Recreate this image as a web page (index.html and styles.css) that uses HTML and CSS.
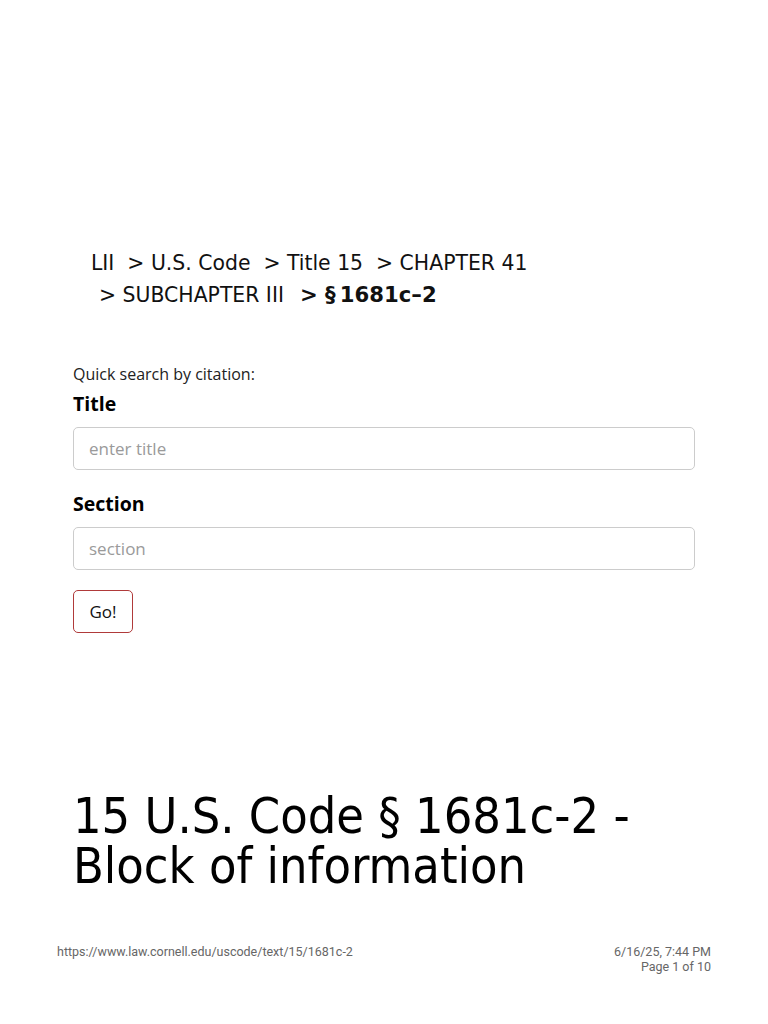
FILE: index.html
```html
<!DOCTYPE html>
<html>
<head>
<meta charset="utf-8">
<link rel="stylesheet" href="styles.css">
</head>
<body>
<div class="page">
  <nav class="crumbs">
    <div class="crumb-line">LII &nbsp;&gt; U.S. Code &nbsp;&gt; Title 15 &nbsp;&gt; CHAPTER 41</div>
    <div class="crumb-line second">&gt; SUBCHAPTER III &nbsp;<b>&gt; §&#8201;1681c–2</b></div>
  </nav>
  <form class="search">
    <div class="intro">Quick search by citation:</div>
    <label class="label">Title</label>
    <div class="input">enter title</div>
    <label class="label section">Section</label>
    <div class="input">section</div>
    <div class="btn">Go!</div>
  </form>
  <h1 class="heading"><span class="hl">15 U.S. Code § 1681c-2 -</span><span class="hl">Block of information</span></h1>
</div>
<footer class="foot">
  <div class="url">https://www.law.cornell.edu/uscode/text/15/1681c-2</div>
  <div class="meta">
    <div>6/16/25, 7:44 PM</div>
    <div>Page 1 of 10</div>
  </div>
</footer>
</body>
</html>
```

FILE: styles.css
```css
html, body {
  margin: 0;
  padding: 0;
  background: #fff;
  color: #000;
}
.page {
  padding: 248px 73px 0 73px;
  height: 690px;
  box-sizing: border-box;
}
.crumbs {
  font-family: "DejaVu Sans", Verdana, sans-serif;
  font-size: 20.4px;
  line-height: 31px;
  padding-left: 18px;
  color: #111;
}
.crumb-line.second {
  padding-left: 8px;
}
.crumb-line b {
  font-weight: bold;
  font-size: 21.2px;
  padding-left: 3px;
}
.search {
  font-family: "Open Sans", "Noto Sans", sans-serif;
  margin-top: 52px;
}
.intro {
  font-size: 16px;
  line-height: 22px;
  color: #222;
}
.label {
  display: block;
  font-size: 19.5px;
  font-weight: 700;
  line-height: 26px;
  margin-top: 6px;
  margin-bottom: 10px;
}
.label.section {
  margin-top: 21px;
}
.input {
  height: 43px;
  box-sizing: border-box;
  border: 1px solid #ccc;
  border-radius: 5px;
  padding: 0 15px;
  display: flex;
  align-items: center;
  font-size: 17px;
  color: #9a9a9a;
}
.btn {
  margin-top: 20px;
  width: 60px;
  height: 43px;
  box-sizing: border-box;
  border: 1.5px solid #b03a3a;
  border-radius: 5px;
  display: flex;
  align-items: center;
  justify-content: center;
  font-size: 17px;
  color: #111;
}
.heading {
  font-family: "DejaVu Sans Condensed", "DejaVu Sans", sans-serif;
  font-weight: normal;
  font-size: 50px;
  line-height: 50px;
  margin: 0;
  margin-top: 158px;
}
.heading .hl {
  display: block;
}
.foot {
  margin-top: 254px;
  padding: 0 57px;
  display: flex;
  justify-content: space-between;
  font-family: Roboto, "Liberation Sans", sans-serif;
  font-size: 12.5px;
  line-height: 15px;
  color: #666;
}
.foot .meta {
  text-align: right;
}
```
